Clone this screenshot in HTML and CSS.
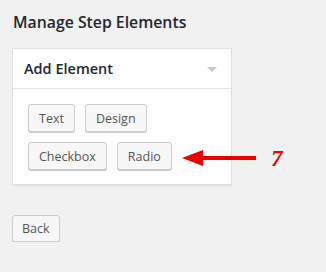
FILE: index.html
```html
<!DOCTYPE html>
<html lang="en">
<head>
    <meta charset="UTF-8">
    <meta name="viewport" content="width=device-width, initial-scale=1.0">
    <title>Manage Step Elements</title>
    <link rel="stylesheet" href="styles.css">
</head>
<body>
    <div class="wrap">
        <h2>Manage Step Elements</h2>
        <div class="postbox">
            <div class="postbox-head">
                <span>Add Element</span>
                <span class="toggle"></span>
            </div>
            <div class="postbox-inside">
                <div class="btn-row">
                    <button class="button">Text</button>
                    <button class="button">Design</button>
                </div>
                <div class="btn-row">
                    <button class="button">Checkbox</button>
                    <button class="button">Radio</button>
                </div>
            </div>
            <div class="note">
                <svg width="76" height="18" viewBox="0 0 76 18">
                    <polygon points="0,8 21,0 21,16" fill="#ee0000"/>
                    <rect x="20" y="6" width="54" height="4" fill="#ee0000"/>
                </svg>
                <span class="note-num">7</span>
            </div>
        </div>
        <button class="button back">Back</button>
    </div>
</body>
</html>
```

FILE: styles.css
```css
body {
    margin: 0;
    padding: 0;
    background-color: #f1f1f1;
    font-family: "Open Sans", Arial, sans-serif;
    color: #23282d;
}
.wrap {
    padding: 0 12px;
}
h2 {
    margin: 0;
    padding: 11px 0 0 1px;
    font-size: 15.8px;
    font-weight: 600;
    line-height: 22px;
    height: 37px;
}
.postbox {
    position: relative;
    width: 218px;
    background: #fff;
    border: 1px solid #e0e0e0;
    box-shadow: 0 1px 1px rgba(0, 0, 0, 0.06);
}
.postbox-head {
    display: flex;
    align-items: center;
    justify-content: space-between;
    height: 39px;
    padding: 0 14px 0 11px;
    border-bottom: 1px solid #e5e5e5;
    font-size: 14.5px;
    font-weight: 600;
}
.toggle {
    width: 0;
    height: 0;
    border-left: 5px solid transparent;
    border-right: 5px solid transparent;
    border-top: 5px solid #c8c8c8;
    margin-top: 2px;
}
.postbox-inside {
    padding: 15px 15px 14px 15px;
    display: flex;
    flex-direction: column;
    gap: 10px;
}
.btn-row {
    display: flex;
    gap: 10px;
}
.button {
    height: 28px;
    padding: 0 10px;
    font-family: "Open Sans", Arial, sans-serif;
    font-size: 12.5px;
    color: #555;
    background: #f7f7f7;
    border: 1px solid #cccccc;
    border-radius: 3px;
    box-shadow: 0 1px 0 #cccccc;
    cursor: pointer;
}
.note {
    position: absolute;
    left: 169px;
    top: 101px;
    display: flex;
    align-items: center;
}
.note-num {
    margin-left: 13px;
    font-family: "Liberation Serif", serif;
    font-weight: bold;
    font-style: italic;
    font-size: 23px;
    color: #ee0000;
    line-height: 18px;
}
.back {
    margin-top: 30px;
    padding: 0 9px;
    height: 27px;
}
```
